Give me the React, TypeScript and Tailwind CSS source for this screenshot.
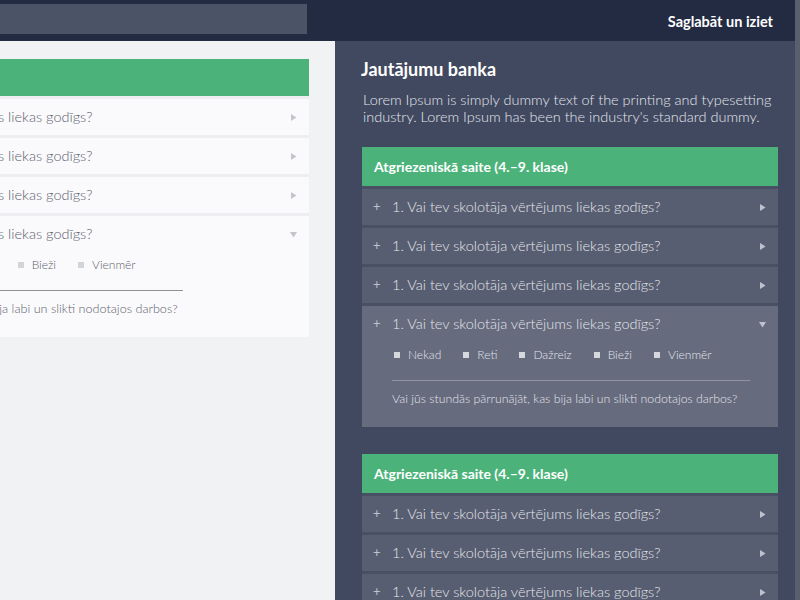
import React from 'react';

const options = ['Nekad', 'Reti', 'Dažreiz', 'Bieži', 'Vienmēr'];
const question = '1. Vai tev skolotāja vērtējums liekas godīgs?';
const followUp = 'Vai jūs stundās pārrunājāt, kas bija labi un slikti nodotajos darbos?';

function Arrow({ down = false, className = '' }: { down?: boolean; className?: string }) {
  return (
    <svg width="7" height="7" viewBox="0 0 7 7" className={className}>
      {down ? <polygon points="0,1 7,1 3.5,6.5" fill="currentColor" /> : <polygon points="1,0 6.5,3.5 1,7" fill="currentColor" />}
    </svg>
  );
}

function Group({ light = false, open = true, rows = 3 }: { light?: boolean; open?: boolean; rows?: number }) {
  const rowBg = light ? 'bg-[#fafafc] text-[#5d616c]' : 'bg-[#585e71] text-[#e3e5eb]';
  const openBg = light ? 'bg-[#fafafc] text-[#5d616c]' : 'bg-[#666b7e] text-[#e3e5eb]';
  const dim = light ? 'text-[#c3c5cb]' : 'text-[#bfc2cc]';
  return (
    <div className={`flex flex-col gap-[3px] ${light ? 'bg-[#eceef1]' : 'bg-[#4a5064]'}`}>
      <div className={`${light ? 'h-[37px]' : 'h-[39px]'} flex items-center px-3 bg-[#4bb37a] text-white text-[14px] font-bold`}>
        Atgriezeniskā saite (4.–9. klase)
      </div>
      {Array.from({ length: rows }).map((_, i) => (
        <div key={i} className={`h-[36px] flex items-center pl-[11px] pr-[12px] ${rowBg}`}>
          <span className={`w-[19px] text-[13px] ${dim}`}>+</span>
          <span className="text-[14.5px] font-light">{question}</span>
          <Arrow className={`ml-auto ${dim}`} />
        </div>
      ))}
      {open && (
        <div className={`flex flex-col pb-[20px] ${openBg}`}>
          <div className="h-[36px] flex items-center pl-[11px] pr-[12px]">
            <span className={`w-[19px] text-[13px] ${dim}`}>+</span>
            <span className="text-[14.5px] font-light">{question}</span>
            <Arrow down className={`ml-auto ${dim}`} />
          </div>
          <div className={`mt-[5px] ${light ? 'pl-[24px]' : 'pl-[32px]'} flex items-center gap-[22px] text-[12px] font-light leading-4`}>
            {options.map((o) => (
              <div key={o} className="flex items-center gap-[8px]">
                <span className={`w-[6px] h-[6px] ${light ? 'bg-[#d3d4d8]' : 'bg-[#d6d8de]'}`} />
                <span>{o}</span>
              </div>
            ))}
          </div>
          <div className={`mt-[17px] ml-[30px] h-px ${light ? 'mr-[126px] bg-[#8f9196]' : 'mr-[28px] bg-[#8f93a2]'}`} />
          <p className={`mt-[10px] ml-[30px] font-light leading-4 ${light ? 'text-[12.6px]' : 'text-[12.3px]'}`}>{followUp}</p>
        </div>
      )}
    </div>
  );
}

export default function App() {
  return (
    <div className="flex w-[800px] h-[600px] overflow-hidden" style={{ fontFamily: 'Lato, "Noto Sans", sans-serif' }}>
      <div className="flex-1 flex flex-col min-w-0">
        {/* Top bar */}
        <header className="h-[41px] shrink-0 bg-[#232b43] flex items-start">
          <div className="mt-[4px] w-[307px] h-[30px] bg-[#4b5366]" />
          <span className="ml-auto mr-[22px] mt-[11px] text-[14.5px] font-bold text-white">Saglabāt un iziet</span>
        </header>

        <div className="flex flex-1 min-h-0">
          {/* Left: preview (scrolled sideways) */}
          <div className="w-[335px] shrink-0 bg-[#f1f2f4] overflow-hidden pt-[18px]">
            <div className="ml-[-206px] w-[515px]">
              <Group light />
            </div>
          </div>

          {/* Right: question bank */}
          <div className="flex-1 bg-[#414960] pl-[26px] pr-[12px] pt-[16px] overflow-hidden">
            <h2 className="text-[18px] leading-6 font-bold text-white">Jautājumu banka</h2>
            <p className="mt-[10px] ml-[2px] text-[14.5px] leading-[17px] font-light text-[#e4e7ee]">
              Lorem Ipsum is simply dummy text of the printing and typesetting industry. Lorem Ipsum has been the industry's standard dummy.
            </p>
            <div className="mt-[22px] ml-[1px] mr-[5px]">
              <Group />
            </div>
            <div className="mt-[27px] ml-[1px] mr-[5px]">
              <Group open={false} rows={4} />
            </div>
          </div>
        </div>
      </div>
      <div className="w-[5px] shrink-0 bg-[#5a5f6f]" />
    </div>
  );
}
